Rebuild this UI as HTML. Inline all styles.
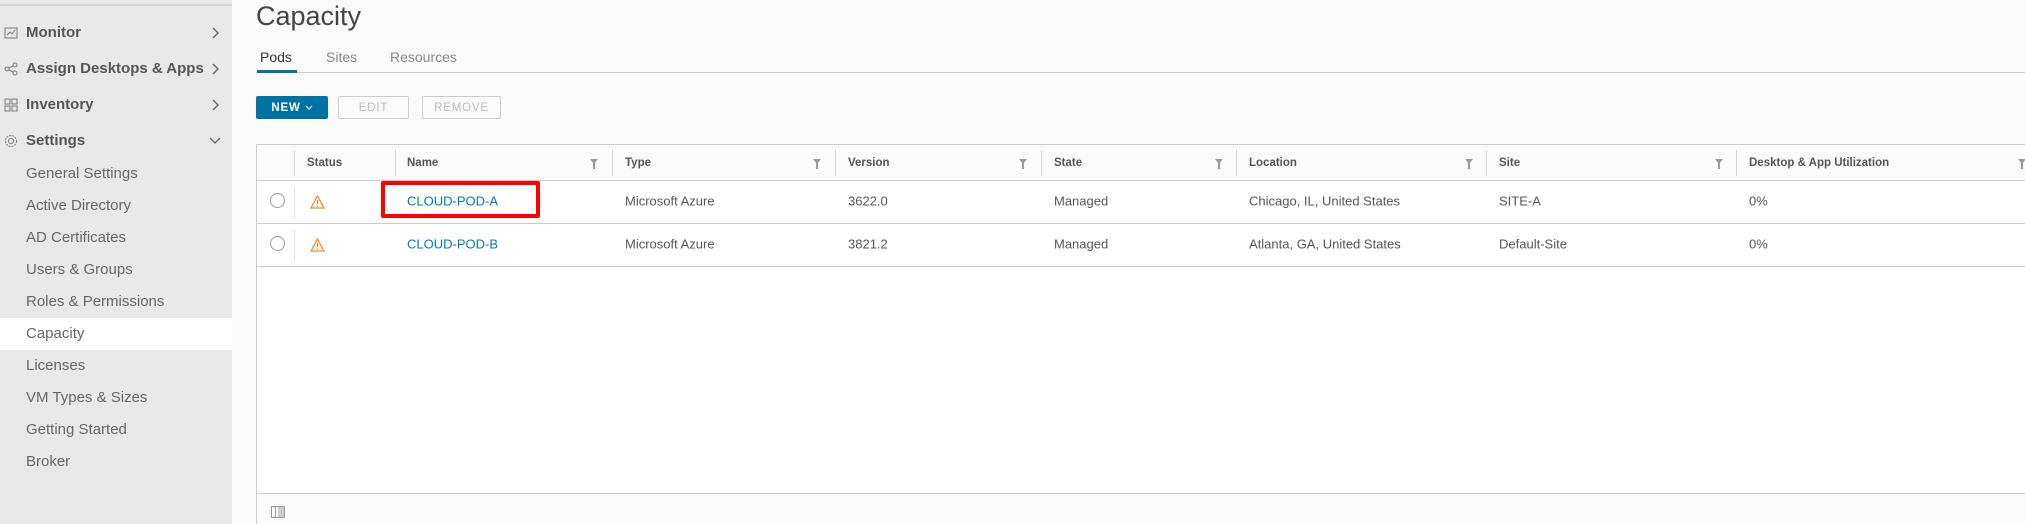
<!DOCTYPE html>
<html><head><style>
*{margin:0;padding:0;box-sizing:border-box}
body{width:2025px;height:524px;overflow:hidden;background:#fafafa;font-family:"Liberation Sans",sans-serif;position:relative;color:#565656}
.sb{position:absolute;left:0;top:0;width:232px;height:524px;background:#e8e8e8}
.h{position:absolute;left:26px;font-size:15px;font-weight:bold;color:#555}
.s{position:absolute;left:26px;font-size:15px;color:#666}
.chev{position:absolute;left:210px}
.ic{position:absolute;left:4px;width:14px;height:14px}
.a{position:absolute}
.col{position:absolute;top:163px;transform:translateY(-50%);font-size:11.5px;font-weight:bold;color:#555}
.sep{position:absolute;top:150px;height:26px;width:1px;background:#d7d7d7}
.f{position:absolute;top:159px;width:0;height:0;border-left:4px solid transparent;border-right:4px solid transparent;border-top:5px solid #9a9a9a}
.f:after{content:"";position:absolute;left:-1px;top:-1px;width:2px;height:6px;background:#9a9a9a}
.c{position:absolute;font-size:13px;color:#565656;transform:translateY(-50%)}
.btn{position:absolute;top:96px;height:23px;font-size:11.5px;letter-spacing:.8px;font-weight:bold;display:flex;align-items:center;justify-content:center;border-radius:2px}
</style></head><body>
<div class="sb"></div>
<div class="a" style="left:0;top:4px;width:232px;height:2px;background:#d4d4d4"></div>
<svg class="ic" style="top:26px" viewBox="0 0 14 14"><rect x="1" y="2" width="12" height="10" fill="none" stroke="#777"/><path d="M3 9l3-3 2 2 3-4" fill="none" stroke="#777"/></svg>
<div class="h" style="top:24px">Monitor</div>
<svg class="chev" style="top:26px" width="10" height="14" viewBox="0 0 10 14"><path d="M3 2l5 5-5 5" fill="none" stroke="#666" stroke-width="1.4"/></svg>
<svg class="ic" style="top:62px" viewBox="0 0 14 14"><circle cx="11" cy="3" r="2" fill="none" stroke="#777"/><circle cx="3" cy="7" r="2" fill="none" stroke="#777"/><circle cx="11" cy="11" r="2" fill="none" stroke="#777"/><path d="M5 6l4-2M5 8l4 2" stroke="#777"/></svg>
<div class="h" style="top:60px">Assign Desktops &amp; Apps</div>
<svg class="chev" style="top:62px" width="10" height="14" viewBox="0 0 10 14"><path d="M3 2l5 5-5 5" fill="none" stroke="#666" stroke-width="1.4"/></svg>
<svg class="ic" style="top:98px" viewBox="0 0 14 14"><rect x="1" y="1" width="5" height="5" fill="none" stroke="#777"/><rect x="8" y="1" width="5" height="5" fill="none" stroke="#777"/><rect x="1" y="8" width="5" height="5" fill="none" stroke="#777"/><rect x="8" y="8" width="5" height="5" fill="none" stroke="#777"/></svg>
<div class="h" style="top:96px">Inventory</div>
<svg class="chev" style="top:98px" width="10" height="14" viewBox="0 0 10 14"><path d="M3 2l5 5-5 5" fill="none" stroke="#666" stroke-width="1.4"/></svg>
<svg class="ic" style="top:134px" viewBox="0 0 14 14"><circle cx="7" cy="7" r="5.5" fill="none" stroke="#777" stroke-dasharray="2 1"/><circle cx="7" cy="7" r="2.5" fill="none" stroke="#777"/></svg>
<div class="h" style="top:132px">Settings</div>
<svg class="a" style="left:209px;top:136px" width="12" height="8" viewBox="0 0 12 8"><path d="M1 2l5 5 5-5" fill="none" stroke="#666" stroke-width="1.4"/></svg>
<div class="s" style="top:165px">General Settings</div>
<div class="s" style="top:197px">Active Directory</div>
<div class="s" style="top:229px">AD Certificates</div>
<div class="s" style="top:261px">Users &amp; Groups</div>
<div class="s" style="top:293px">Roles &amp; Permissions</div>
<div class="a" style="left:0;top:318px;width:232px;height:32px;background:#fff"></div>
<div class="s" style="top:325px">Capacity</div>
<div class="s" style="top:357px">Licenses</div>
<div class="s" style="top:389px">VM Types &amp; Sizes</div>
<div class="s" style="top:421px">Getting Started</div>
<div class="s" style="top:453px">Broker</div>

<div class="a" style="left:256px;top:0;font-size:27px;color:#444;line-height:32px">Capacity</div>
<div class="a" style="left:260px;top:49px;font-size:14px;color:#333">Pods</div>
<div class="a" style="left:326px;top:49px;font-size:14px;color:#888">Sites</div>
<div class="a" style="left:390px;top:49px;font-size:14px;color:#888">Resources</div>
<div class="a" style="left:256px;top:72px;width:1769px;height:1px;background:#ccc"></div>
<div class="a" style="left:257px;top:70px;width:40px;height:3px;background:#0072a3"></div>

<div class="btn" style="left:256px;width:72px;background:#0072a3;color:#fff">NEW&nbsp;<svg width="8" height="6" viewBox="0 0 8 6"><path d="M1 1l3 3 3-3" fill="none" stroke="#fff" stroke-width="1.2"/></svg></div>
<div class="btn" style="left:338px;width:71px;border:1px solid #ccc;color:#bbb;font-weight:normal">EDIT</div>
<div class="btn" style="left:422px;width:79px;border:1px solid #ccc;color:#bbb;font-weight:normal">REMOVE</div>

<div class="a" style="left:256px;top:144px;width:1769px;height:380px;background:#fff;border-top:1px solid #ccc;border-left:1px solid #ccc"></div>
<div class="a" style="left:257px;top:145px;width:1768px;height:36px;background:#fafafa;border-bottom:1px solid #ccc"></div>
<div class="sep" style="left:294px"></div><div class="col" style="left:307px">Status</div>
<div class="sep" style="left:395px"></div><div class="col" style="left:407px">Name</div><div class="f" style="left:590px"></div>
<div class="sep" style="left:612px"></div><div class="col" style="left:625px">Type</div><div class="f" style="left:813px"></div>
<div class="sep" style="left:835px"></div><div class="col" style="left:848px">Version</div><div class="f" style="left:1019px"></div>
<div class="sep" style="left:1041px"></div><div class="col" style="left:1054px">State</div><div class="f" style="left:1215px"></div>
<div class="sep" style="left:1236px"></div><div class="col" style="left:1249px">Location</div><div class="f" style="left:1465px"></div>
<div class="sep" style="left:1486px"></div><div class="col" style="left:1499px">Site</div><div class="f" style="left:1715px"></div>
<div class="sep" style="left:1736px"></div><div class="col" style="left:1749px">Desktop &amp; App Utilization</div><div class="f" style="left:2018px"></div>

<div class="a" style="left:257px;top:223px;width:1768px;height:1px;background:#ccc"></div>
<div class="a" style="left:257px;top:266px;width:1768px;height:1px;background:#ccc"></div>
<div class="a" style="left:294px;top:187px;width:1px;height:31px;background:#ddd"></div>
<div class="a" style="left:294px;top:230px;width:1px;height:31px;background:#ddd"></div>
<div class="a" style="left:270px;top:193px;width:15px;height:15px;border:1px solid #999;border-radius:50%"></div>
<div class="a" style="left:270px;top:236px;width:15px;height:15px;border:1px solid #999;border-radius:50%"></div>
<svg class="a" style="left:310px;top:195px" width="15" height="14" viewBox="0 0 15 14"><path d="M7.5 1L14 13H1z" fill="none" stroke="#f38b2d" stroke-width="1.3"/><path d="M7.5 5v4M7.5 10.5v1.2" stroke="#f38b2d" stroke-width="1.3"/></svg>
<svg class="a" style="left:310px;top:238px" width="15" height="14" viewBox="0 0 15 14"><path d="M7.5 1L14 13H1z" fill="none" stroke="#f38b2d" stroke-width="1.3"/><path d="M7.5 5v4M7.5 10.5v1.2" stroke="#f38b2d" stroke-width="1.3"/></svg>

<div class="a" style="left:381px;top:181px;width:159px;height:37px;border:4px solid #f00;border-radius:2px"></div>
<div class="c" style="left:407px;top:201px;color:#0079b8">CLOUD-POD-A</div>
<div class="c" style="left:625px;top:201px">Microsoft Azure</div>
<div class="c" style="left:848px;top:201px">3622.0</div>
<div class="c" style="left:1054px;top:201px">Managed</div>
<div class="c" style="left:1249px;top:201px">Chicago, IL, United States</div>
<div class="c" style="left:1499px;top:201px">SITE-A</div>
<div class="c" style="left:1749px;top:201px">0%</div>
<div class="c" style="left:407px;top:244px;color:#0079b8">CLOUD-POD-B</div>
<div class="c" style="left:625px;top:244px">Microsoft Azure</div>
<div class="c" style="left:848px;top:244px">3821.2</div>
<div class="c" style="left:1054px;top:244px">Managed</div>
<div class="c" style="left:1249px;top:244px">Atlanta, GA, United States</div>
<div class="c" style="left:1499px;top:244px">Default-Site</div>
<div class="c" style="left:1749px;top:244px">0%</div>

<div class="a" style="left:257px;top:493px;width:1768px;height:31px;background:#fafafa;border-top:1px solid #ccc"></div>
<svg class="a" style="left:271px;top:506px" width="14" height="12" viewBox="0 0 14 12"><rect x="0.5" y="0.5" width="13" height="11" fill="none" stroke="#999"/><rect x="7" y="1" width="6" height="10" fill="#ccc"/><path d="M4.5 1v10" stroke="#999"/></svg>
</body></html>
